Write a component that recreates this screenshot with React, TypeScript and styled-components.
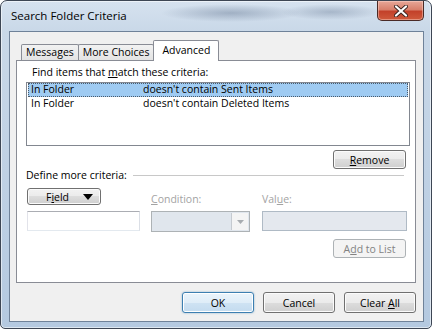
import React from 'react';
import styled, { createGlobalStyle, css } from 'styled-components';

const GlobalStyle = createGlobalStyle`
  html, body {
    margin: 0;
    padding: 0;
    background: #ffffff;
  }
  body {
    font-family: "Open Sans", "Noto Sans", sans-serif;
    font-size: 10.5px;
    color: #000;
  }
`;

const criteria = [
  { field: 'In Folder', condition: "doesn't contain Sent Items", selected: true },
  { field: 'In Folder', condition: "doesn't contain Deleted Items", selected: false },
];

const App: React.FC = () => {
  return (
    <>
      <GlobalStyle />
      <Window>
        <TitleBar>
          <Title>Search Folder Criteria</Title>
          <CloseButton aria-label="Close">
            <svg width="14" height="12" viewBox="0 0 14 12">
              <path
                d="M2 1.5 L12 10.5 M12 1.5 L2 10.5"
                stroke="#3a2420"
                strokeWidth="4"
                strokeLinecap="round"
              />
              <path
                d="M2 1.5 L12 10.5 M12 1.5 L2 10.5"
                stroke="#ffffff"
                strokeWidth="2.2"
                strokeLinecap="round"
              />
            </svg>
          </CloseButton>
        </TitleBar>

        <Client>
          <TabStrip>
            <Tab>Messages</Tab>
            <Tab>More Choices</Tab>
            <Tab $active>Advanced</Tab>
          </TabStrip>

          <Panel>
            <ListLabel>
              Find items that <u>m</u>atch these criteria:
            </ListLabel>
            <ListBox>
              {criteria.map((c, i) => (
                <ListRow key={i} $selected={c.selected}>
                  <FieldCell>{c.field}</FieldCell>
                  <span>{c.condition}</span>
                </ListRow>
              ))}
            </ListBox>

            <PanelButton>
              <span>
                <u>R</u>emove
              </span>
            </PanelButton>

            <DefineRow>
              <span>Define more criteria:</span>
              <Rule />
            </DefineRow>

            <CriteriaGrid>
              <FieldButton>
                <span>
                  F<u>i</u>eld
                </span>
                <Arrow />
              </FieldButton>
              <DimLabel>
                <u>C</u>ondition:
              </DimLabel>
              <DimLabel $shift={1}>
                Val<u>u</u>e:
              </DimLabel>

              <TextBox />
              <ComboBox>
                <ComboArrow>
                  <svg width="7" height="4" viewBox="0 0 7 4">
                    <path d="M0 0 H7 L3.5 4 Z" fill="#a8acb0" />
                  </svg>
                </ComboArrow>
              </ComboBox>
              <TextBox $disabled />
            </CriteriaGrid>

            <PanelButton $top={8} $disabled>
              <span>
                A<u>d</u>d to List
              </span>
            </PanelButton>
          </Panel>

          <Footer>
            <DialogButton $default>
              <span>OK</span>
            </DialogButton>
            <DialogButton>
              <span>Cancel</span>
            </DialogButton>
            <DialogButton>
              <span>
                Clear <u>A</u>ll
              </span>
            </DialogButton>
          </Footer>
        </Client>
      </Window>
    </>
  );
};

const Window = styled.div`
  width: 432px;
  height: 329px;
  box-sizing: border-box;
  display: flex;
  flex-direction: column;
  border: 1px solid #3d4654;
  border-radius: 7px 7px 5px 5px;
  background:
    radial-gradient(ellipse 70px 9px at 230px 12px, rgba(70, 90, 120, 0.35), transparent),
    radial-gradient(ellipse 50px 8px at 330px 11px, rgba(70, 90, 120, 0.3), transparent),
    linear-gradient(180deg, #d6e2ef 0px, #c9d8e8 30px, #b4c9e0 100%);
  box-shadow: inset 0 0 0 1px rgba(255, 255, 255, 0.55);
  overflow: hidden;
`;

const TitleBar = styled.div`
  height: 30px;
  flex: none;
  display: flex;
  align-items: flex-start;
  padding-left: 10px;
`;

const Title = styled.div`
  flex: 1;
  font-family: "Open Sans", sans-serif;
  font-size: 11.5px;
  line-height: 30px;
  color: #000;
`;

const CloseButton = styled.div`
  width: 47px;
  height: 20px;
  margin-right: 7px;
  box-sizing: border-box;
  display: flex;
  align-items: center;
  justify-content: center;
  border: 1px solid #4a2a26;
  border-top: none;
  border-radius: 0 0 5px 5px;
  background: linear-gradient(180deg, #e7a798 0%, #d8806c 45%, #c3412a 55%, #cf5a3c 100%);
  box-shadow: inset 0 0 0 1px rgba(255, 220, 210, 0.45);
`;

const Client = styled.div`
  height: 291px;
  flex: none;
  box-sizing: border-box;
  margin: 0 7px 0 8px;
  border: 1px solid #6f8299;
  background: #f0f0f0;
  display: flex;
  flex-direction: column;
  padding: 8px 7px 8px 6px;
`;

const TabStrip = styled.div`
  height: 20px;
  flex: none;
  display: flex;
  align-items: flex-end;
  padding-left: 5px;
  position: relative;
  z-index: 1;
`;

const Tab = styled.div<{ $active?: boolean }>`
  box-sizing: border-box;
  height: 16px;
  padding: 0 4px;
  line-height: 14px;
  border: 1px solid #898c95;
  border-bottom: none;
  border-radius: 2px 2px 0 0;
  background: linear-gradient(180deg, #f2f2f2, #e3e3e3);
  white-space: nowrap;
  & + & {
    margin-left: -1px;
  }
  ${(p) =>
    p.$active &&
    css`
      height: 21px;
      margin-bottom: -1px;
      padding: 2px 8px 0 8px;
      background: #ffffff;
      line-height: 14px;
    `}
`;

const Panel = styled.div`
  height: 223px;
  flex: none;
  box-sizing: border-box;
  border: 1px solid #898c95;
  background: #ffffff;
  display: flex;
  flex-direction: column;
  padding: 4px 5px 0 9px;
`;

const ListLabel = styled.div`
  height: 14px;
  line-height: 14px;
  margin: 0 0 3px 6px;
`;

const ListBox = styled.div`
  height: 64px;
  box-sizing: border-box;
  border: 1px solid #828790;
  background: #fff;
  padding: 0 1px;
`;

const ListRow = styled.div<{ $selected?: boolean }>`
  height: 14px;
  line-height: 13px;
  display: flex;
  padding-left: 3px;
  box-sizing: border-box;
  ${(p) =>
    p.$selected &&
    css`
      background: #9fcbf2;
      outline: 1px dotted #4a5a6a;
      outline-offset: -1px;
    `}
`;

const FieldCell = styled.span`
  width: 112px;
  flex: none;
`;

const buttonFace = css`
  box-sizing: border-box;
  border: 1px solid #707070;
  border-radius: 3px;
  background: linear-gradient(180deg, #f2f2f2 0%, #ebebeb 50%, #dddddd 50%, #cfcfcf 100%);
  box-shadow: inset 0 0 0 1px #fbfbfb;
  display: flex;
  align-items: center;
  justify-content: center;
  white-space: nowrap;
`;

const disabledFace = css`
  border-color: #adb2b5;
  background: #f4f4f4;
  box-shadow: none;
  color: #838383;
`;

const PanelButton = styled.div<{ $top?: number; $disabled?: boolean }>`
  ${buttonFace};
  align-self: flex-end;
  width: 73px;
  height: 19px;
  margin-top: ${(p) => p.$top ?? 4}px;
  margin-right: 4px;
  ${(p) => p.$disabled && disabledFace}
`;

const DefineRow = styled.div`
  height: 13px;
  line-height: 13px;
  display: flex;
  align-items: center;
  padding-right: 6px;
`;

const Rule = styled.div`
  flex: 1;
  height: 0;
  margin-left: 6px;
  border-top: 1px solid #c8c8c8;
`;

const CriteriaGrid = styled.div`
  display: grid;
  grid-template-columns: 113px 99px 146px;
  grid-template-rows: 17px 20px;
  column-gap: 11px;
  row-gap: 6px;
  margin-top: 6px;
  padding-left: 1px;
`;

const FieldButton = styled.div`
  ${buttonFace};
  width: 74px;
  justify-content: space-between;
  padding: 0 7px 0 18px;
`;

const Arrow = styled.span`
  width: 0;
  height: 0;
  border-left: 5px solid transparent;
  border-right: 5px solid transparent;
  border-top: 6px solid #000;
`;

const DimLabel = styled.div<{ $shift?: number }>`
  align-self: end;
  color: #a3a3a3;
  line-height: 13px;
  margin-bottom: -1px;
  margin-left: ${(p) => p.$shift ?? 0}px;
`;

const TextBox = styled.div<{ $disabled?: boolean }>`
  box-sizing: border-box;
  border: 1px solid #abadb3;
  border-color: #abadb3 #dbdfe6 #e3e9ef #e2e3ea;
  background: #fff;
  ${(p) =>
    p.$disabled &&
    css`
      margin-left: 1px;
      border-color: #afbac5;
      background: #e4e8ee;
    `}
`;

const ComboBox = styled.div`
  box-sizing: border-box;
  height: 21px;
  border: 1px solid #adb2b5;
  background: #e0e6ed;
  display: flex;
  justify-content: flex-end;
  padding: 1px;
`;

const ComboArrow = styled.div`
  width: 16px;
  border-left: 1px solid #c5cad0;
  background: #f4f4f4;
  display: flex;
  align-items: center;
  justify-content: center;
`;

const Footer = styled.div`
  margin-top: 9px;
  height: 21px;
  display: flex;
  justify-content: flex-end;
  gap: 9px;
`;

const DialogButton = styled.div<{ $default?: boolean }>`
  ${buttonFace};
  width: 72px;
  height: 21px;
  ${(p) =>
    p.$default &&
    css`
      border-color: #3c7fb1;
      background: linear-gradient(180deg, #eaf4fb 0%, #dfedf8 50%, #cfe3f3 50%, #c3dbef 100%);
      box-shadow: inset 0 0 0 1px #ffffff, 0 0 2px rgba(60, 127, 177, 0.6);
    `}
`;

export default App;
